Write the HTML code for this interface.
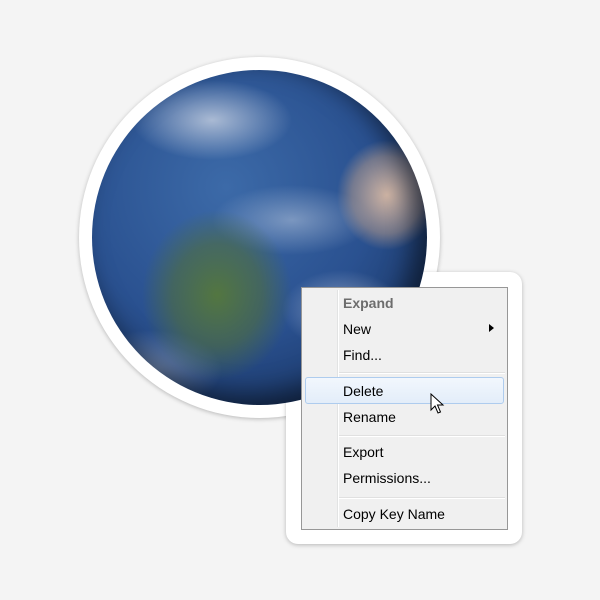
<!DOCTYPE html>
<html><head><style>
body{margin:0;width:600px;height:600px;background:#f4f4f4;position:relative;overflow:hidden;font-family:"Liberation Sans",sans-serif}
.sticker{position:absolute;background:#fff;filter:drop-shadow(0 1px 2px rgba(0,0,0,.25))}
.globe{position:absolute;left:92px;top:70px;width:335px;height:335px;border-radius:50%;overflow:hidden;
background:
radial-gradient(ellipse 50px 55px at 295px 125px,rgba(215,185,165,.95),rgba(190,160,140,.5) 70%,transparent),
radial-gradient(ellipse 75px 85px at 125px 225px,rgba(85,120,60,.95),rgba(80,110,60,.6) 60%,transparent),
radial-gradient(ellipse 80px 40px at 120px 50px,rgba(220,225,235,.7),transparent),
radial-gradient(ellipse 70px 40px at 60px 300px,rgba(220,225,235,.4),transparent),
radial-gradient(ellipse 60px 40px at 250px 240px,rgba(220,225,235,.5),transparent),
radial-gradient(ellipse 80px 35px at 200px 150px,rgba(210,220,235,.45),transparent),
radial-gradient(circle at 40% 35%,#3c6aa8,#2a5190 50%,#1b3868 80%,#0c1a30 100%);
box-shadow:inset -12px -10px 25px rgba(0,0,0,.5)}
.menu{position:absolute;left:301px;top:287px;width:205px;height:241px;background:#f0f0f0;border:1px solid #979797;font-size:14px;color:#000}
.gut{position:absolute;left:35px;top:2px;bottom:2px;width:1px;background:#e2e3e3;border-right:1px solid #fff}
.it{position:absolute;left:41px;height:20px;line-height:20px}
.sep{position:absolute;left:37px;right:2px;height:1px;background:#e0e0e0;border-bottom:1px solid #fff}
.hl{position:absolute;left:3px;right:3px;top:89px;height:25px;border:1px solid #aeccee;border-radius:3px;background:linear-gradient(#f2f7fd,#e3edf9)}
</style></head><body>
<div class="sticker" style="left:79px;top:57px;width:361px;height:361px;border-radius:50%"></div>
<div class="sticker" style="left:286px;top:272px;width:236px;height:272px;border-radius:12px"></div>
<div class="globe"></div>
<div class="menu">
<div class="gut"></div>
<div class="hl"></div>
<div class="it" style="top:5px;color:#6d6d6d;font-weight:bold">Expand</div>
<div class="it" style="top:31px">New</div>
<div style="position:absolute;left:187px;top:36px;width:0;height:0;border-left:5px solid #000;border-top:4px solid transparent;border-bottom:4px solid transparent"></div>
<div class="it" style="top:57px">Find...</div>
<div class="sep" style="top:84px"></div>
<div class="it" style="top:93px">Delete</div>
<div class="it" style="top:119px">Rename</div>
<div class="sep" style="top:147px"></div>
<div class="it" style="top:154px">Export</div>
<div class="it" style="top:180px">Permissions...</div>
<div class="sep" style="top:209px"></div>
<div class="it" style="top:216px">Copy Key Name</div>
<svg style="position:absolute;left:128px;top:105px" width="16" height="24" viewBox="0 0 16 24"><path d="M1 1 L1 17 L5 13 L8 20 L10.5 19 L7.5 12 L13 12 Z" fill="#fff" stroke="#000" stroke-width="1"/></svg>
</div>
</body></html>
